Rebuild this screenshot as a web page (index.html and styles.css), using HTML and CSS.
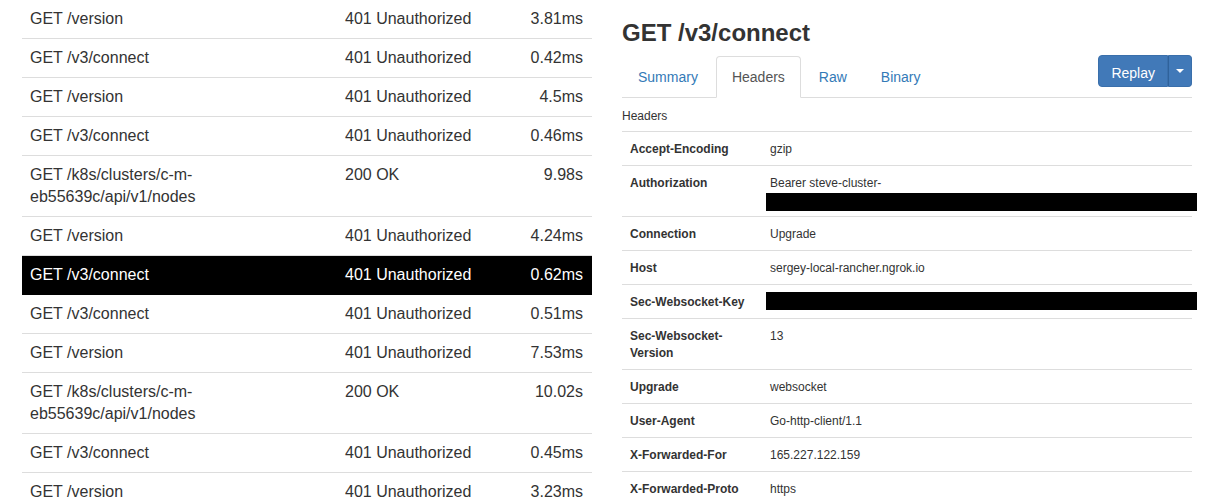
FILE: index.html
```html
<!DOCTYPE html>
<html lang="en">
<head>
<meta charset="utf-8">
<title>Requests</title>
<link rel="stylesheet" href="styles.css">
</head>
<body>
<div class="page">
  <section class="requests">
    <table class="req-table">
      <colgroup><col class="c-path"><col class="c-status"><col class="c-time"></colgroup>
      <tbody>
        <tr><td>GET /version</td><td>401 Unauthorized</td><td class="time">3.81ms</td></tr>
        <tr><td>GET /v3/connect</td><td>401 Unauthorized</td><td class="time">0.42ms</td></tr>
        <tr><td>GET /version</td><td>401 Unauthorized</td><td class="time">4.5ms</td></tr>
        <tr><td>GET /v3/connect</td><td>401 Unauthorized</td><td class="time">0.46ms</td></tr>
        <tr><td>GET /k8s/clusters/c-m-eb55639c/api/v1/nodes</td><td>200 OK</td><td class="time">9.98s</td></tr>
        <tr><td>GET /version</td><td>401 Unauthorized</td><td class="time">4.24ms</td></tr>
        <tr class="selected"><td>GET /v3/connect</td><td>401 Unauthorized</td><td class="time">0.62ms</td></tr>
        <tr><td>GET /v3/connect</td><td>401 Unauthorized</td><td class="time">0.51ms</td></tr>
        <tr><td>GET /version</td><td>401 Unauthorized</td><td class="time">7.53ms</td></tr>
        <tr><td>GET /k8s/clusters/c-m-eb55639c/api/v1/nodes</td><td>200 OK</td><td class="time">10.02s</td></tr>
        <tr><td>GET /v3/connect</td><td>401 Unauthorized</td><td class="time">0.45ms</td></tr>
        <tr><td>GET /version</td><td>401 Unauthorized</td><td class="time">3.23ms</td></tr>
      </tbody>
    </table>
  </section>

  <section class="detail">
    <h3 class="detail-title">GET /v3/connect</h3>
    <div class="tabbar">
      <ul class="tabs">
        <li><a href="#">Summary</a></li>
        <li class="active"><a href="#">Headers</a></li>
        <li><a href="#">Raw</a></li>
        <li><a href="#">Binary</a></li>
      </ul>
      <div class="btn-group">
        <button class="btn btn-main" type="button">Replay</button>
        <button class="btn btn-caret" type="button"><span class="caret"></span></button>
      </div>
    </div>
    <div class="section-label">Headers</div>
    <table class="hdr-table">
      <colgroup><col class="c-key"><col class="c-val"></colgroup>
      <tbody>
        <tr><th>Accept-Encoding</th><td>gzip</td></tr>
        <tr><th>Authorization</th><td>Bearer steve-cluster-<div class="redact redact-wrap"></div></td></tr>
        <tr><th>Connection</th><td>Upgrade</td></tr>
        <tr><th>Host</th><td>sergey-local-rancher.ngrok.io</td></tr>
        <tr><th>Sec-Websocket-Key</th><td><div class="redact redact-line"></div></td></tr>
        <tr><th>Sec-Websocket-Version</th><td>13</td></tr>
        <tr><th>Upgrade</th><td>websocket</td></tr>
        <tr><th>User-Agent</th><td>Go-http-client/1.1</td></tr>
        <tr><th>X-Forwarded-For</th><td>165.227.122.159</td></tr>
        <tr><th>X-Forwarded-Proto</th><td>https</td></tr>
      </tbody>
    </table>
  </section>
</div>
</body>
</html>
```

FILE: styles.css
```css
html, body {
  margin: 0;
  padding: 0;
  overflow: hidden;
  background: #fff;
}

body {
  font-family: "Liberation Sans", Arial, Helvetica, sans-serif;
  color: #333;
}

.page {
  display: flex;
  gap: 30px;
  padding-left: 22px;
  align-items: flex-start;
}

.requests,
.detail {
  width: 570px;
  flex: 0 0 570px;
}

/* ---------- request list ---------- */
.req-table {
  width: 570px;
  border-collapse: collapse;
  table-layout: fixed;
  font-size: 16px;
  line-height: 22px;
}

.req-table .c-path { width: 315px; }
.req-table .c-status { width: 150px; }
.req-table .c-time { width: 105px; }

.req-table td {
  padding: 8px;
  vertical-align: top;
  border-bottom: 1px solid #ddd;
}

.req-table td.time {
  text-align: right;
  padding-right: 9px;
}

.req-table tr.selected td {
  background: #000;
  color: #fff;
  border-bottom-color: #000;
}

/* ---------- detail panel ---------- */
.detail-title {
  margin: 20px 0 10px;
  font-size: 24px;
  line-height: 26px;
  font-weight: 700;
  color: #333;
}

.tabbar {
  display: flex;
  justify-content: space-between;
  align-items: flex-start;
  border-bottom: 1px solid #ddd;
}

.tabs {
  display: flex;
  list-style: none;
  margin: 0;
  padding: 0;
}

.tabs li {
  margin: 0 2px -1px 0;
}

.tabs a {
  display: block;
  padding: 10px 15px;
  font-size: 14px;
  line-height: 20px;
  color: #337ab7;
  text-decoration: none;
  border: 1px solid transparent;
  border-radius: 4px 4px 0 0;
}

.tabs li.active a {
  color: #555;
  background: #fff;
  border-color: #ddd #ddd transparent;
}

.btn-group {
  display: flex;
  margin-top: -1px;
}

.btn {
  font-family: inherit;
  font-size: 14px;
  line-height: 20px;
  color: #fff;
  background: #4179b8;
  border: 1px solid #3a6fab;
  padding: 7px 12px 3px;
  margin: 0;
  cursor: pointer;
}

.btn-main {
  border-radius: 4px 0 0 4px;
}

.btn-caret {
  border-radius: 0 4px 4px 0;
  border-left-color: #2f629b;
  padding: 5px 7px;
  display: flex;
  align-items: center;
}

.caret {
  display: block;
  width: 0;
  height: 0;
  border-left: 4px solid transparent;
  border-right: 4px solid transparent;
  border-top: 4px solid #fff;
}

.section-label {
  font-size: 12px;
  line-height: 17px;
  padding: 10px 0 6px;
  border-bottom: 1px solid #ddd;
}

.hdr-table {
  width: 570px;
  border-collapse: collapse;
  table-layout: fixed;
  font-size: 12px;
  line-height: 17px;
}

.hdr-table .c-key { width: 140px; }
.hdr-table .c-val { width: 430px; }

.hdr-table th,
.hdr-table td {
  padding: 9px 8px 7px;
  text-align: left;
  vertical-align: top;
  border-bottom: 1px solid #ddd;
}

.hdr-table th {
  font-weight: 700;
}

.redact {
  background: #000;
  width: 431px;
  height: 18px;
  margin-left: -4px;
}

.redact-wrap {
  margin-top: 1px;
  margin-bottom: -2px;
}

.redact-line {
  margin-top: -2px;
  margin-bottom: 1px;
}
```
